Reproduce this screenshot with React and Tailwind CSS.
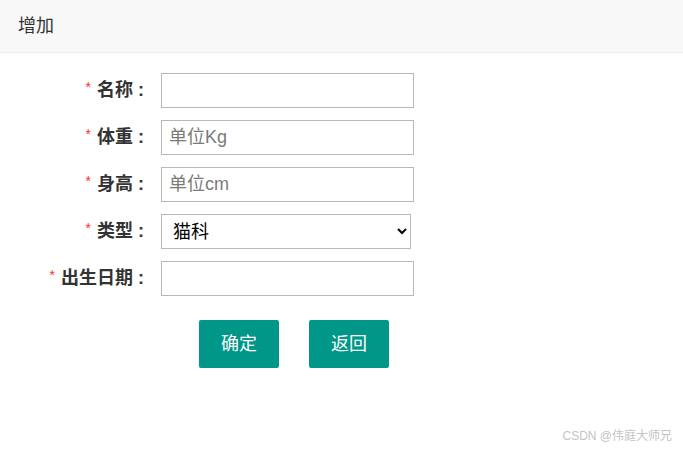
import React from "react";

const fields = [
  { label: "名称", placeholder: "" },
  { label: "体重", placeholder: "单位Kg" },
  { label: "身高", placeholder: "单位cm" },
  { label: "类型", select: true },
  { label: "出生日期", placeholder: "" },
];

function Label({ text }) {
  return (
    <label className="w-[146px] shrink-0 flex items-center justify-end text-[18px] font-bold text-[#333]">
      <span className="text-[#ff2d2d] text-[14px] font-normal mr-[6px] -mt-[6px]">*</span>
      {text}
      <span className="ml-[5px] mr-[2px]">:</span>
    </label>
  );
}

export default function App() {
  return (
    <div
      className="relative w-[683px] h-[453px] bg-white overflow-hidden"
      style={{ fontFamily: '"Liberation Sans", "Noto Sans CJK SC", sans-serif' }}
    >
      <div className="h-[53px] bg-[#f8f8f8] border-b border-[#ececec] flex items-center px-[18px] text-[18px] text-[#333]">
        增加
      </div>

      <form className="pt-[20px] flex flex-col gap-[12px]">
        {fields.map((f) => (
          <div key={f.label} className="flex items-center gap-[15px]">
            <Label text={f.label} />
            {f.select ? (
              <select
                defaultValue="cat"
                className="w-[250px] h-[35px] border border-[#b8b8b8] bg-white pl-[7px] pr-[6px] text-[18px] text-black outline-none"
              >
                <option value="cat">猫科</option>
                <option value="dog">犬科</option>
              </select>
            ) : (
              <input
                type="text"
                placeholder={f.placeholder}
                className="w-[253px] h-[35px] border border-[#b8b8b8] px-[7px] text-[18px] text-[#333] placeholder:text-[#7a7a7a] outline-none"
              />
            )}
          </div>
        ))}
      </form>

      <div className="flex gap-[30px] pl-[199px] mt-[24px]">
        <button className="w-[80px] h-[48px] rounded-[2px] bg-[#009688] text-white text-[18px]">确定</button>
        <button className="w-[80px] h-[48px] rounded-[2px] bg-[#009688] text-white text-[18px]">返回</button>
      </div>

      <div className="absolute right-[11px] bottom-[8px] text-[12px] text-[#c4c4c4]">CSDN @伟庭大师兄</div>
    </div>
  );
}
